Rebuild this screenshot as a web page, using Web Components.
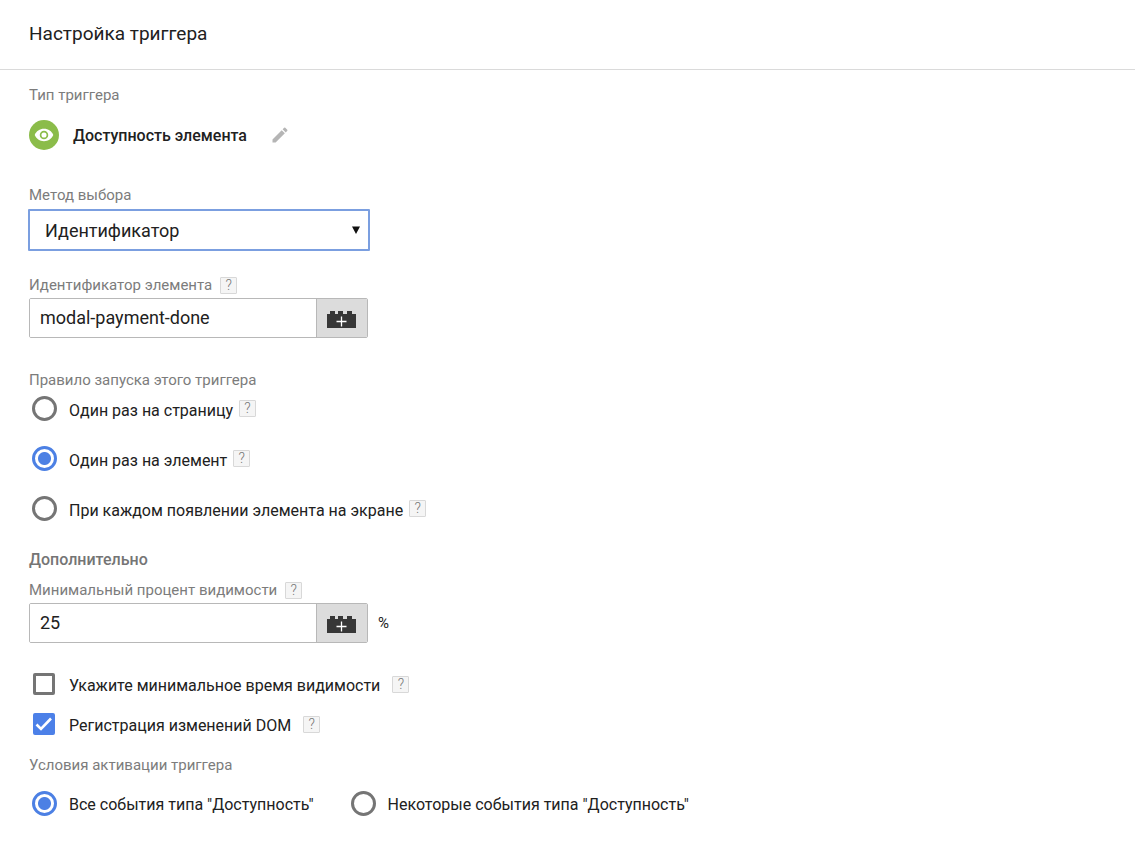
<!DOCTYPE html>
<html lang="ru">
<head>
<meta charset="utf-8">
<meta name="viewport" content="width=device-width, initial-scale=1">
<title>Настройка триггера</title>
<style>
  body { margin: 0; background: #fff; color: #212121; font-family: Roboto, "Noto Sans", sans-serif; font-size: 15px; line-height: 20px; }
</style>
</head>
<body>
<trigger-panel>
  <span slot="title">Настройка триггера</span>
  <field-block>
    <span slot="label">Тип триггера</span>
    <trigger-type>Доступность элемента</trigger-type>
  </field-block>
  <select-field value="Идентификатор">Метод выбора</select-field>
  <variable-field value="modal-payment-done">Идентификатор элемента</variable-field>
  <field-block>
    <span slot="label">Правило запуска этого триггера</span>
    <radio-group name="rule" selected="1">
      <span data-help>Один раз на страницу</span>
      <span data-help>Один раз на элемент</span>
      <span data-help>При каждом появлении элемента на экране</span>
    </radio-group>
  </field-block>
  <section-title>Дополнительно</section-title>
  <variable-field value="25" unit="%">Минимальный процент видимости</variable-field>
  <check-field>Укажите минимальное время видимости</check-field>
  <check-field checked>Регистрация изменений DOM</check-field>
  <field-block class="conditions">
    <span slot="label">Условия активации триггера</span>
    <radio-group name="condition" selected="0" inline>
      <span>Все события типа "Доступность"</span>
      <span>Некоторые события типа "Доступность"</span>
    </radio-group>
  </field-block>
</trigger-panel>

<script>
function define(name, html, setup) {
  const template = document.createElement('template');
  template.innerHTML = html;
  customElements.define(name, class extends HTMLElement {
    constructor() {
      super();
      this.attachShadow({ mode: 'open' }).append(template.content.cloneNode(true));
    }
    connectedCallback() {
      if (setup && !this.ready) { this.ready = true; setup(this, this.shadowRoot); }
    }
  });
}

define('help-button', `
  <style>
    :host { display: inline-flex; flex: none; }
    button { box-sizing: border-box; width: 17px; height: 17px; padding: 0; border: 1px solid #d8d8d8; border-radius: 1px; background: #f5f5f5; color: #777; font: 300 14px/15px Roboto, sans-serif; text-align: center; cursor: pointer; }
  </style>
  <button type="button" aria-label="?">?</button>`);

define('trigger-panel', `
  <style>
    :host { display: block; }
    header { padding: 20px 29px 21px; border-bottom: 1px solid #dadada; }
    h1 { margin: 0; font-size: 19px; font-weight: 400; line-height: 28px; }
    main { padding: 15px 29px 32px; }
    ::slotted(select-field) { margin-top: 35px; margin-bottom: 24px; }
    ::slotted(variable-field) { margin-bottom: 32px; }
    ::slotted(variable-field[unit]) { margin-bottom: 26px; }
    ::slotted(check-field) { margin-bottom: 10px; }
    ::slotted(.conditions) { margin-top: 16px; }
  </style>
  <header><h1><slot name="title"></slot></h1></header>
  <main><slot></slot></main>`);

define('field-block', `
  <style>
    :host { display: block; }
    .label { color: #7c7c7c; line-height: 20px; }
  </style>
  <div class="label"><slot name="label"></slot></div>
  <slot></slot>`);

define('section-title', `
  <style>
    :host { display: block; }
    h2 { margin: 0 0 10px; color: #757575; font-size: 16px; font-weight: 500; line-height: 20px; }
  </style>
  <h2><slot></slot></h2>`);

define('trigger-type', `
  <style>
    :host { display: flex; align-items: center; margin-top: 15px; font-size: 16px; font-weight: 500; }
    .badge { width: 30px; height: 30px; margin-right: 14px; }
    .name { padding-top: 2px; }
    button { display: flex; margin-left: 23px; padding: 0; border: 0; background: none; cursor: pointer; }
    svg { display: block; }
  </style>
  <svg class="badge" viewBox="0 0 30 30" aria-hidden="true">
    <circle cx="15" cy="15" r="15" fill="#8bbc4a"/>
    <path d="M15 8.800c-4.200 0-7.800 2.500-9.300 6.200 1.500 3.700 5.100 6.200 9.300 6.200s7.800-2.500 9.300-6.200c-1.500-3.700-5.100-6.200-9.300-6.200z" fill="#fff"/>
    <circle cx="15" cy="15" r="3.400" fill="#fff" stroke="#8bbc4a" stroke-width="1.700"/>
  </svg>
  <span class="name"><slot></slot></span>
  <button type="button" aria-label="Изменить">
    <svg width="20" height="20" viewBox="0 0 24 24" fill="#b5b5b5"><path d="M3 17.250V21h3.750L17.810 9.940l-3.750-3.750L3 17.250zM20.710 7.040a1 1 0 0 0 0-1.410l-2.340-2.340a1 1 0 0 0-1.410 0l-1.830 1.830 3.750 3.750 1.830-1.830z"/></svg>
  </button>`);

define('select-field', `
  <style>
    :host { display: block; }
    label { display: block; color: #7c7c7c; line-height: 20px; }
    .box { display: grid; align-items: center; max-width: 342px; margin: 4px -1px 0; }
    select, svg { grid-area: 1 / 1; }
    select { appearance: none; box-sizing: border-box; width: 100%; height: 42px; padding: 1px 32px 0 15px; border: 2px solid #7b9fe0; border-radius: 1px; outline: 0; background: #fff; color: #212121; font: 400 18px/24px Roboto, sans-serif; }
    svg { justify-self: end; margin-right: 10px; pointer-events: none; }
  </style>
  <label for="method"><slot></slot></label>
  <div class="box">
    <select id="method"></select>
    <svg width="8" height="8" viewBox="0 0 8 8" aria-hidden="true"><path d="M0 .5h8L4 8z" fill="#111"/></svg>
  </div>`, (host, root) => {
  root.querySelector('select').add(new Option(host.getAttribute('value')));
});

define('variable-field', `
  <style>
    :host { display: block; }
    .head { display: flex; align-items: center; gap: 8px; }
    label { color: #7c7c7c; line-height: 20px; }
    .row { display: flex; align-items: center; gap: 10px; margin-top: 3px; }
    .box { display: flex; box-sizing: border-box; width: 339px; max-width: 100%; height: 40px; border: 1px solid #b8b8b8; border-radius: 2px; overflow: hidden; }
    input { flex: 1; min-width: 0; padding: 0 10px; border: 0; outline: 0; background: #fff; color: #212121; font: 400 18px/24px Roboto, sans-serif; }
    .box button { display: flex; box-sizing: border-box; align-items: center; justify-content: center; width: 51px; padding: 2px 2px 0 0; border: 0; border-left: 1px solid #b8b8b8; background: #dcdcdc; cursor: pointer; }
    .unit { font-size: 15px; }
  </style>
  <div class="head"><label for="value"><slot></slot></label><help-button></help-button></div>
  <div class="row">
    <div class="box">
      <input id="value" type="text">
      <button type="button" aria-label="Вставить переменную">
        <svg width="29" height="18" viewBox="0 0 29 18" aria-hidden="true">
          <path d="M0 18V4h3V1h5v3h3V1h5v3h4V1h5v3h4v14z" fill="#373737"/>
          <path d="M14.500 6.500v10M9.500 11.500h10" stroke="#fff" stroke-width="1.300"/>
        </svg>
      </button>
    </div>
    <span class="unit"></span>
  </div>`, (host, root) => {
  root.querySelector('input').value = host.getAttribute('value');
  root.querySelector('.unit').textContent = host.getAttribute('unit') || '';
});

define('radio-group', `
  <style>
    :host { display: flex; flex-direction: column; gap: 25px; margin: 6px 0 29px 3px; }
    :host([inline]) { flex-direction: row; flex-wrap: wrap; gap: 37px; margin-top: 16px; margin-bottom: 0; }
    .option { display: flex; align-items: center; gap: 6px; height: 25px; }
    label { display: flex; align-items: center; gap: 12px; font-size: 16px; line-height: 20px; cursor: pointer; }
    .text { padding-top: 4px; }
    :host([inline]) .text { padding-top: 2px; }
    input { appearance: none; flex: none; box-sizing: border-box; width: 25px; height: 25px; margin: 0; border: 3px solid #757575; border-radius: 50%; background: #fff; }
    input:checked { border-color: #4c80e4; background: radial-gradient(circle, #4c80e4 6px, #fff 7px) padding-box; }
  </style>`, (host, root) => {
  [...host.children].forEach((text, i) => {
    text.slot = 'option-' + i;
    const row = document.createElement('div');
    row.className = 'option';
    row.innerHTML = `<label><input type="radio" name="${host.getAttribute('name')}"><span class="text"><slot name="option-${i}"></slot></span></label>`;
    row.querySelector('input').checked = i === Number(host.getAttribute('selected'));
    if ('help' in text.dataset) row.append(document.createElement('help-button'));
    root.append(row);
  });
});

define('check-field', `
  <style>
    :host { display: flex; align-items: center; gap: 12px; height: 30px; padding-left: 4px; }
    label { display: flex; align-items: center; gap: 14px; font-size: 16px; line-height: 20px; cursor: pointer; }
    .text { padding-top: 3px; }
    .box { display: grid; flex: none; place-items: center; }
    input, svg { grid-area: 1 / 1; }
    input { appearance: none; box-sizing: border-box; width: 22px; height: 22px; margin: 0; border: 3px solid #757575; border-radius: 2px; background: #fff; }
    input:checked { border-color: #4c80e8; background: #4c80e8; }
    svg { visibility: hidden; pointer-events: none; }
    input:checked + svg { visibility: visible; }
  </style>
  <label><span class="box"><input type="checkbox"><svg width="22" height="22" viewBox="0 0 22 22" aria-hidden="true"><path d="M3.500 11.500l4.500 4.500L18 5.500" fill="none" stroke="#fff" stroke-width="2.600"/></svg></span><span class="text"><slot></slot></span></label>
  <help-button></help-button>`, (host, root) => {
  root.querySelector('input').checked = host.hasAttribute('checked');
});
</script>
</body>
</html>
